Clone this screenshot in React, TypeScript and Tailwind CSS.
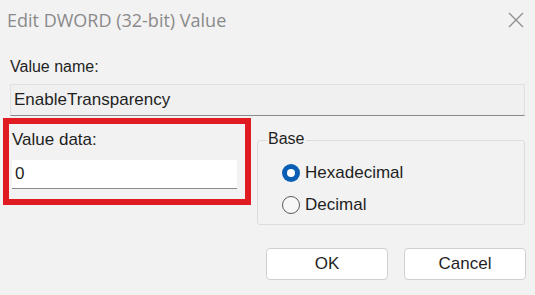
const App = () => {
  return (
    <div
      className="w-[535px] h-[295px] bg-[#f2f2f2] overflow-hidden flex flex-col"
      style={{ fontFamily: '"Liberation Sans", Arial, sans-serif' }}
    >
      {/* title bar */}
      <div className="h-[40px] flex flex-row items-center justify-between pl-[7px] pr-[11px]">
        <span
          className="text-[18px] text-[#8a8a8a] leading-none"
          style={{ fontFamily: '"Open Sans", "Noto Sans", sans-serif' }}
        >
          Edit DWORD (32-bit) Value
        </span>
        <svg width="16" height="16" viewBox="0 0 16 16" className="text-[#8f8f8f]">
          <path d="M1 1 L15 15 M15 1 L1 15" stroke="currentColor" strokeWidth="1.3" fill="none" />
        </svg>
      </div>

      <div className="flex flex-col px-[10px]">
        <span className="mt-[17px] text-[16px] leading-[20px] text-[#1f1f1f]">Value name:</span>
        <div className="mt-[7px] h-[32px] w-[515px] bg-[#f0f0f0] border border-[#e0e0e0] border-b-[#8a8a8a] flex items-center pl-[3px]">
          <span className="text-[17px] text-[#1f1f1f]">EnableTransparency</span>
        </div>

        <div className="flex flex-row mt-[2px]">
          {/* value data, highlighted */}
          <div className="ml-[-7px] w-[249px] h-[87px] border-[6px] border-[#e11b22] flex flex-col pl-[3px] pr-[8px]">
            <span className="mt-[6px] text-[17px] leading-[20px] text-[#1f1f1f]">Value data:</span>
            <div className="mt-[10px] h-[29px] bg-white border-b border-[#8a8a8a] flex items-center pl-[3px]">
              <span className="text-[17px] text-[#1f1f1f]">0</span>
            </div>
          </div>

          {/* base group */}
          <div className="relative ml-[6px] mt-[22px] w-[269px] h-[85px] border border-[#dcdcdc] rounded-[3px] flex flex-col pl-[24px] pt-[22px] gap-[12px]">
            <span className="absolute left-[9px] top-[-12px] px-[1px] bg-[#f2f2f2] text-[16px] leading-[20px] text-[#1f1f1f]">
              Base
            </span>
            <div className="flex flex-row items-center gap-[5px]">
              <div className="w-[18px] h-[18px] rounded-full bg-[#0a5fb4] flex items-center justify-center">
                <div className="w-[8px] h-[8px] rounded-full bg-white" />
              </div>
              <span className="text-[17px] leading-[20px] text-[#1f1f1f]">Hexadecimal</span>
            </div>
            <div className="flex flex-row items-center gap-[5px]">
              <div className="w-[18px] h-[18px] rounded-full border-[1.5px] border-[#5a5a5a] bg-[#f7f7f7]" />
              <span className="text-[17px] leading-[20px] text-[#1f1f1f]">Decimal</span>
            </div>
          </div>
        </div>

        {/* buttons */}
        <div className="flex flex-row justify-end gap-[16px] mt-[23px] mr-[-1px]">
          <button className="w-[122px] h-[32px] bg-white border border-[#d0d0d0] rounded-[4px] text-[17px] text-[#1f1f1f]">
            OK
          </button>
          <button className="w-[122px] h-[32px] bg-white border border-[#d0d0d0] rounded-[4px] text-[17px] text-[#1f1f1f]">
            Cancel
          </button>
        </div>
      </div>
    </div>
  );
};

export default App;
